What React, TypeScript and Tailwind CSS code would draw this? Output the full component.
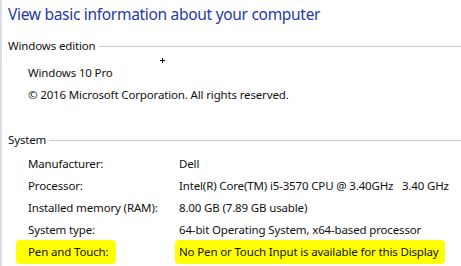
import React from "react";

const rows: [string, string][] = [
  ["Manufacturer:", "Dell"],
  ["Processor:", "Intel(R) Core(TM) i5-3570 CPU @ 3.40GHz   3.40 GHz"],
  ["Installed memory (RAM):", "8.00 GB (7.89 GB usable)"],
  ["System type:", "64-bit Operating System, x64-based processor"],
];

export default function App() {
  return (
    <div
      className="relative w-[461px] h-[266px] overflow-hidden bg-white border-l-2 border-[#d9dee8] text-[11.5px] tracking-[-0.15px] text-[#111] whitespace-nowrap"
      style={{ fontFamily: '"Noto Sans", sans-serif' }}
    >
      <div className="pl-[6px] pt-[2px] text-[15.5px] tracking-[-0.3px] leading-[24px] text-[#1f3aa6]">
        View basic information about your computer
      </div>
      <div className="mt-[12px] pl-[6px] flex items-center gap-[3px] h-[16px]">
        <span className="leading-[16px]">Windows edition</span>
        <div className="flex-1 h-px bg-[#c8c8c8]" />
      </div>
      <div className="pl-[26px] mt-[8px] leading-[22px]">
        <div className="relative">
          Windows 10 Pro
          <svg className="absolute left-[132px] top-[-4px]" width="5" height="5" viewBox="0 0 5 5">
            <rect x="2" y="0" width="1" height="5" fill="#000" />
            <rect x="0" y="2" width="5" height="1" fill="#000" />
          </svg>
        </div>
        <div>© 2016 Microsoft Corporation. All rights reserved.</div>
      </div>
      <div className="mt-[26px] pl-[6px] flex items-center gap-[3px] h-[16px]">
        <span className="leading-[16px]">System</span>
        <div className="flex-1 h-px bg-[#c8c8c8]" />
      </div>
      <div className="mt-[5px] flex flex-col">
        {rows.map(([k, v]) => (
          <div key={k} className="flex h-[22px] items-center">
            <div className="w-[177px] pl-[26px] shrink-0">{k}</div>
            <div className="whitespace-pre">{v}</div>
          </div>
        ))}
        <div className="flex h-[22px] items-center">
          <div className="w-[177px] pl-[14px] shrink-0">
            <span className="inline-block bg-[#ffff00] pl-[12px] pr-[8px] py-[3px] rounded-[4px]">
              Pen and Touch:
            </span>
          </div>
          <div className="-ml-[4px]">
            <span className="inline-block bg-[#ffff00] pl-[4px] pr-[6px] py-[3px] rounded-[4px]">
              No Pen or Touch Input is available for this Display
            </span>
          </div>
        </div>
      </div>
    </div>
  );
}
